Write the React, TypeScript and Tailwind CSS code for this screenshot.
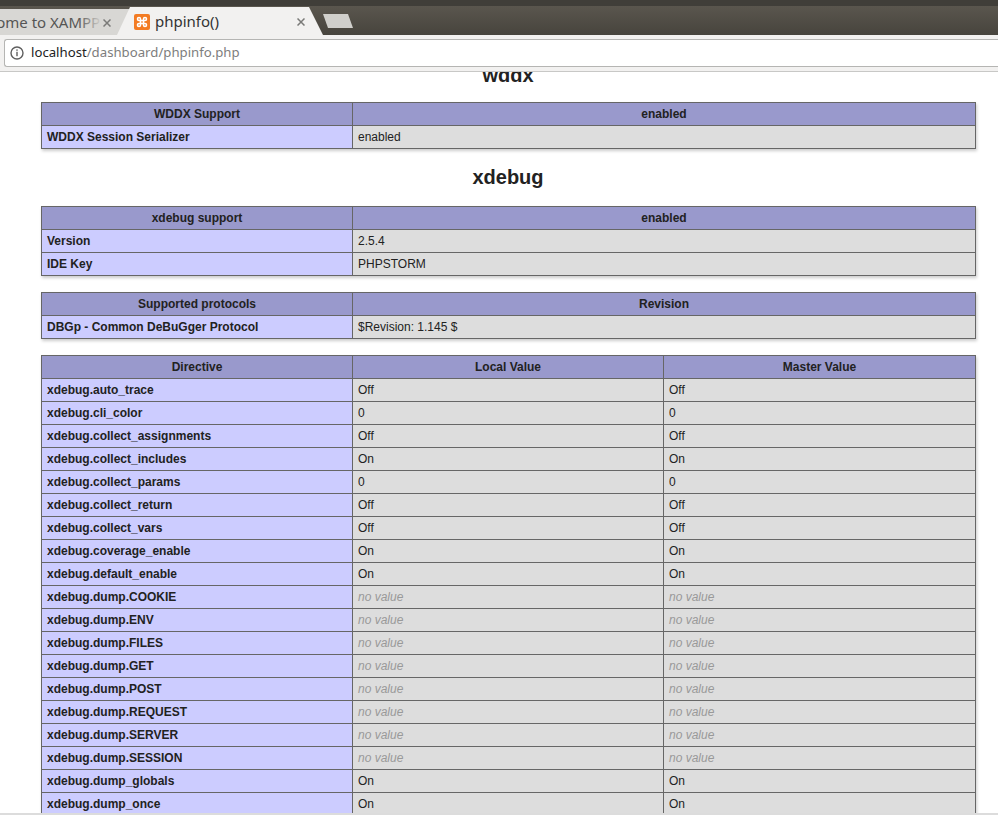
import { Command } from 'lucide-react';

type Cell = string | null;

const directives: [string, Cell, Cell][] = [
  ['xdebug.auto_trace', 'Off', 'Off'],
  ['xdebug.cli_color', '0', '0'],
  ['xdebug.collect_assignments', 'Off', 'Off'],
  ['xdebug.collect_includes', 'On', 'On'],
  ['xdebug.collect_params', '0', '0'],
  ['xdebug.collect_return', 'Off', 'Off'],
  ['xdebug.collect_vars', 'Off', 'Off'],
  ['xdebug.coverage_enable', 'On', 'On'],
  ['xdebug.default_enable', 'On', 'On'],
  ['xdebug.dump.COOKIE', null, null],
  ['xdebug.dump.ENV', null, null],
  ['xdebug.dump.FILES', null, null],
  ['xdebug.dump.GET', null, null],
  ['xdebug.dump.POST', null, null],
  ['xdebug.dump.REQUEST', null, null],
  ['xdebug.dump.SERVER', null, null],
  ['xdebug.dump.SESSION', null, null],
  ['xdebug.dump_globals', 'On', 'On'],
  ['xdebug.dump_once', 'On', 'On'],
];

const cellBase = 'border border-[#666] px-[5px] py-[4px] text-[12px] leading-[14px] align-baseline';

function Value({ v }: { v: Cell }) {
  return (
    <td className={`${cellBase} bg-[#ddd]`}>
      {v === null ? <i className="text-[#999]">no value</i> : v}
    </td>
  );
}

function InfoTable({ head, rows }: { head: string[]; rows: Cell[][] }) {
  return (
    <table className="w-[934px] table-fixed border-collapse shadow-[1px_2px_3px_#ccc]">
      <colgroup>
        <col className="w-[311px]" />
        {head.length === 3 ? (
          <>
            <col className="w-[311px]" />
            <col className="w-[312px]" />
          </>
        ) : (
          <col className="w-[623px]" />
        )}
      </colgroup>
      <thead>
        <tr>
          {head.map((h) => (
            <th key={h} className={`${cellBase} bg-[#99c] text-center font-bold`}>
              {h}
            </th>
          ))}
        </tr>
      </thead>
      <tbody>
        {rows.map((r) => (
          <tr key={r[0] as string}>
            <td className={`${cellBase} bg-[#ccf] font-bold`}>{r[0]}</td>
            {r.slice(1).map((v, i) => (
              <Value key={i} v={v} />
            ))}
          </tr>
        ))}
      </tbody>
    </table>
  );
}

function CloseX({ className }: { className?: string }) {
  return (
    <svg width="8" height="8" viewBox="0 0 8 8" className={className}>
      <path d="M0.5 0.5L7.5 7.5M7.5 0.5L0.5 7.5" stroke="#7a7a78" strokeWidth="1.5" />
    </svg>
  );
}

export default function App() {
  return (
    <div className="w-[998px] h-[817px] overflow-hidden bg-white text-[#222] font-['Liberation_Sans',Arial,sans-serif]">
      {/* Tab strip */}
      <div className="h-[35px] flex items-end bg-[linear-gradient(#403e39_0,#403e39_6px,#5a564e_6px,#47443d_100%)] font-['Noto_Sans',sans-serif]">
        <div className="relative h-[26px] w-[132px] shrink-0 overflow-hidden bg-[#d8d7d4] flex items-center">
          <span className="ml-[-37px] whitespace-nowrap text-[15px] text-[#555]">Welcome to XAMPP</span>
          <div className="absolute right-[30px] top-0 h-full w-[24px] bg-[linear-gradient(90deg,rgba(216,215,212,0),#d8d7d4)]" />
          <div className="absolute right-[20px] top-0 h-full w-[12px] bg-[#d8d7d4]" />
          <CloseX className="absolute left-[103px] top-[10px]" />
        </div>
        <div className="relative -ml-[15px] h-[28px] w-[206px] shrink-0 bg-[#f2f1f0] [clip-path:polygon(0_100%,13px_0,192px_0,100%_100%)] flex items-center">
          <div className="ml-[17px] mt-[1px] h-[16px] w-[16px] rounded-[2px] bg-[#f37b23] flex items-center justify-center">
            <Command size={12} color="#fff" strokeWidth={3.2} />
          </div>
          <span className="ml-[5px] text-[15px] text-[#333]">phpinfo()</span>
          <CloseX className="absolute left-[180px] top-[11px]" />
        </div>
        <div className="ml-[0px] mb-[7px] h-[14px] w-[30px] bg-[#d0cfcb] [clip-path:polygon(0_0,25px_0,100%_100%,5px_100%)]" />
      </div>

      {/* Toolbar */}
      <div className="h-[37px] bg-[#f2f1f0] border-b border-[#c8c8c6] pt-[4px] pl-[4px]">
        <div className="h-[28px] bg-white border border-r-0 border-[#b5b5b3] rounded-l-[3px] flex items-center font-['Noto_Sans',sans-serif]">
          <svg width="14" height="14" viewBox="0 0 14 14" className="ml-[5px]">
            <circle cx="7" cy="7" r="6" fill="none" stroke="#5f5f5f" strokeWidth="1.4" />
            <rect x="6.3" y="5.8" width="1.4" height="4.4" fill="#5f5f5f" />
            <rect x="6.3" y="3.4" width="1.4" height="1.4" fill="#5f5f5f" />
          </svg>
          <span className="ml-[7px] text-[13.2px] text-[#222]">
            localhost<span className="text-[#7d7d7d]">/dashboard/phpinfo.php</span>
          </span>
        </div>
      </div>

      {/* Page content */}
      <div className="h-[743px] overflow-hidden border-b-2 border-[#dcdcdc]">
        <div className="ml-[41px] w-[934px]">
          <h2 className="-mt-[8px] text-center text-[20px] leading-[23px] font-bold">wddx</h2>
          <div className="mt-[15px]">
            <InfoTable head={['WDDX Support', 'enabled']} rows={[['WDDX Session Serializer', 'enabled']]} />
          </div>
          <h2 className="mt-[17px] text-center text-[20px] leading-[23px] font-bold">xdebug</h2>
          <div className="mt-[17px]">
            <InfoTable
              head={['xdebug support', 'enabled']}
              rows={[
                ['Version', '2.5.4'],
                ['IDE Key', 'PHPSTORM'],
              ]}
            />
          </div>
          <div className="mt-[16px]">
            <InfoTable
              head={['Supported protocols', 'Revision']}
              rows={[['DBGp - Common DeBuGger Protocol', '$Revision: 1.145 $']]}
            />
          </div>
          <div className="mt-[16px]">
            <InfoTable head={['Directive', 'Local Value', 'Master Value']} rows={directives} />
          </div>
        </div>
      </div>
    </div>
  );
}
